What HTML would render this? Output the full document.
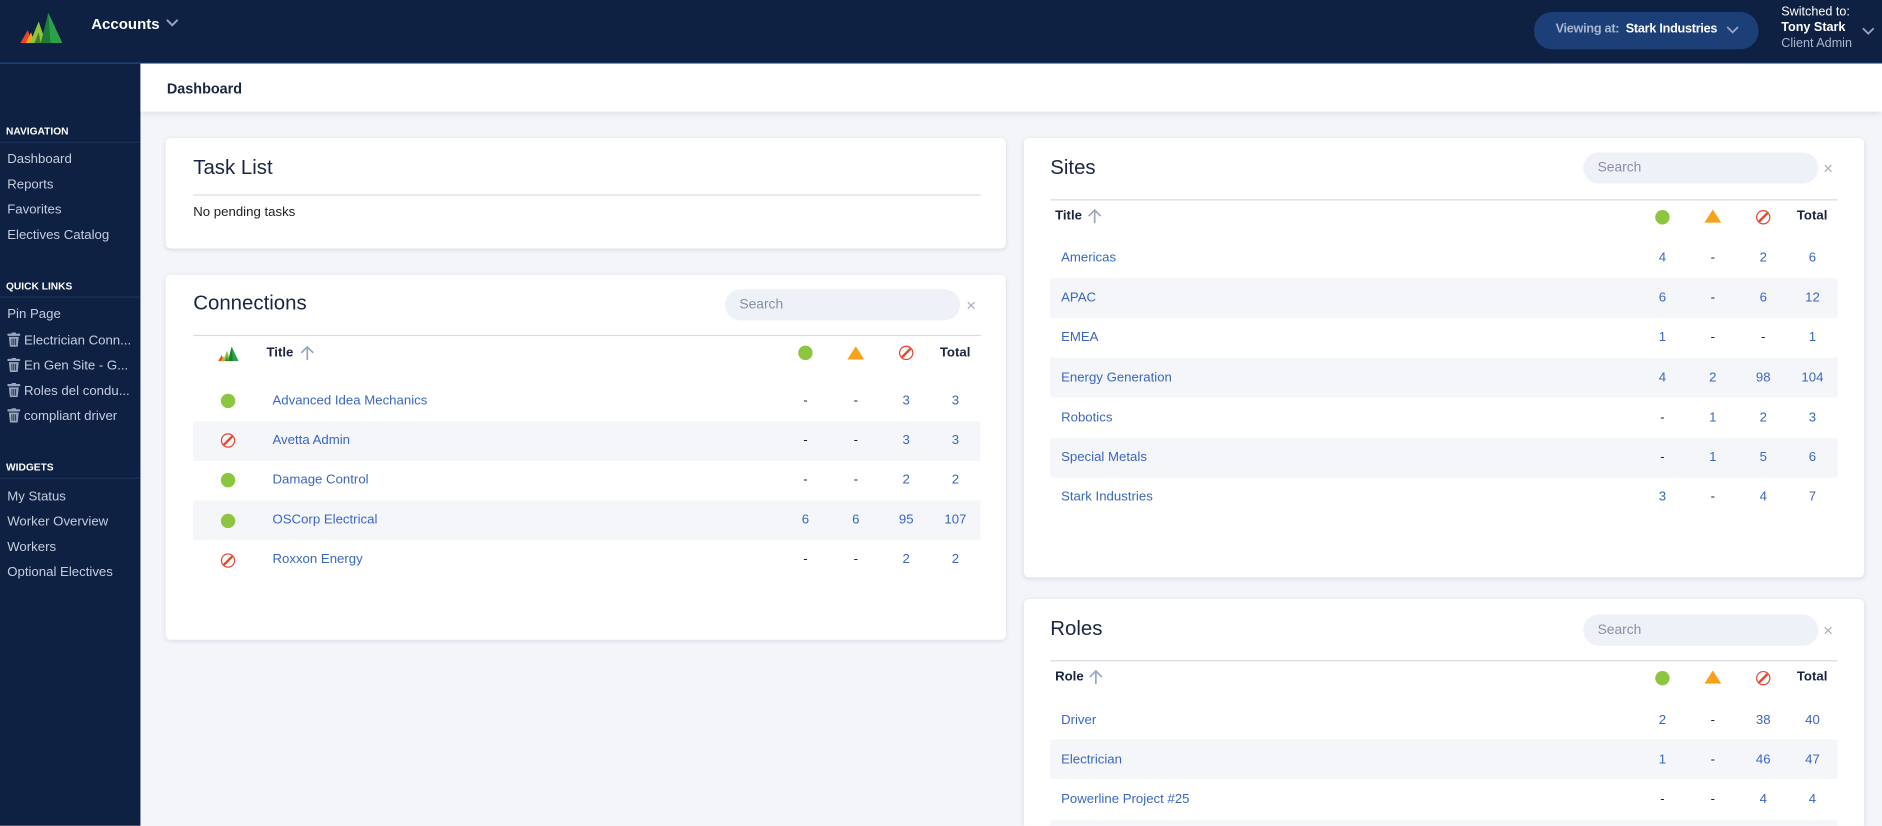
<!DOCTYPE html>
<html><head><meta charset="utf-8"><style>
html,body{margin:0;padding:0;width:1882px;height:825px;overflow:hidden;background:#f3f5f9;}
#w{position:absolute;left:0;top:0;width:1568px;height:688px;transform:scale(1.2003);transform-origin:0 0;font-family:"Liberation Sans",Arial,sans-serif;overflow:hidden;}
.abs{position:absolute;}
.top{left:0;top:0;width:1568px;height:53px;background:#0e2143;border-bottom:1px solid #1d3f72;box-sizing:border-box;}
.side{left:0;top:53px;width:117px;height:640px;background:#0e2143;}
.sh{position:absolute;left:5px;font-size:8.5px;font-weight:bold;color:#fff;}
.sl{position:absolute;left:0;width:117px;height:1px;background:#1c3258;}
.si{position:absolute;left:6px;font-size:11px;color:#c5cee0;white-space:nowrap;}
.si svg{vertical-align:-2px;margin-right:3px;}
.card{position:absolute;background:#fff;border-radius:4px;box-shadow:0 1px 4px rgba(20,40,80,.12);}
.ct{position:absolute;font-size:17px;color:#1a2540;}
.hl{position:absolute;height:1px;background:#d8dbe3;}
.srch{position:absolute;width:196px;height:26px;border-radius:13px;background:#eef1f8;font-size:11.5px;color:#8690a5;line-height:26px;box-sizing:border-box;padding-left:12px;}
.x{position:absolute;font-size:14px;color:#a7aec0;}
.row{position:absolute;height:33px;}
.st{background:#f4f6fa;}
.t{position:absolute;font-size:11px;white-space:nowrap;transform:translate(-50%,-50%);}
.l{position:absolute;font-size:11px;color:#3b66c0;white-space:nowrap;transform:translateY(-50%);}
.b{color:#3b66c0;} .d{color:#222;}
.hd{position:absolute;font-size:11px;font-weight:bold;color:#1a2540;transform:translateY(-50%);}
.gc{position:absolute;width:12px;height:12px;border-radius:50%;background:#8cc63f;transform:translate(-50%,-50%);}
.tri{position:absolute;width:0;height:0;border-left:7px solid transparent;border-right:7px solid transparent;border-bottom:11px solid #f7a21b;transform:translate(-50%,-50%);}
.ban{position:absolute;width:10px;height:10px;border:1.6px solid #e8452f;border-radius:50%;transform:translate(-50%,-50%);overflow:hidden;}
.ban:after{content:"";position:absolute;left:4.2px;top:-2px;width:1.6px;height:14px;background:#e8452f;transform:rotate(45deg);}
.arr{position:absolute;transform:translateY(-50%);}
</style></head><body><div id="w">
<svg width="0" height="0" style="position:absolute"><defs>
<symbol id="logo" viewBox="0 0 40 32">
<polygon points="1,32 8,20 12,32" fill="#e8452f"/>
<polygon points="6,32 11,22 14,32" fill="#f7a21b"/>
<polygon points="10,32 18,12 25,32" fill="#8cc63f"/>
<polygon points="14,32 18,22 20,32" fill="#4a7d2a"/>
<polygon points="20,32 27,4 40,32 31,32" fill="#2aa24a"/>
<polygon points="20,32 27,4 29,32" fill="#1e7a38"/>
</symbol>
<symbol id="trash" viewBox="0 0 12 13"><rect x="0" y="1" width="12" height="2" rx="1" fill="#9aa6bd"/><rect x="4" y="0" width="4" height="2" fill="#9aa6bd"/><path d="M1.5 4h9l-1 9h-7z" fill="#9aa6bd"/><path d="M4.3 5.5v6M6 5.5v6M7.7 5.5v6" stroke="#0e2143" stroke-width=".8"/></symbol>
</defs></svg>
<div class="abs top">
  <svg class="abs" style="left:16px;top:7px" width="36" height="29"><use href="#logo"/></svg>
  <div class="abs" style="left:76px;top:13px;font-size:12.5px;font-weight:bold;color:#fff">Accounts</div>
  <svg class="abs" style="left:138px;top:15px" width="11" height="8"><path d="M1 1.5 L5.5 6 L10 1.5" stroke="#9aa6bd" stroke-width="1.6" fill="none"/></svg>
  <div class="abs" style="left:1278px;top:10px;width:187px;height:31px;border-radius:15px;background:#1d3f78"></div>
  <div class="abs" style="left:1296px;top:18px;font-size:10.5px;color:#a9b6cf;font-weight:bold;white-space:nowrap;letter-spacing:-0.2px">Viewing at:&nbsp; <span style="color:#fff">Stark Industries</span></div>
  <svg class="abs" style="left:1438px;top:21px" width="11" height="8"><path d="M1 1.5 L5.5 6 L10 1.5" stroke="#9aa6bd" stroke-width="1.5" fill="none"/></svg>
  <div class="abs" style="left:1484px;top:4px;font-size:10.5px;color:#fff;line-height:13px">Switched to:<br><b>Tony Stark</b><br><span style="color:#a9b6cf">Client Admin</span></div>
  <svg class="abs" style="left:1551px;top:22px" width="11" height="8"><path d="M1 1.5 L5.5 6 L10 1.5" stroke="#9aa6bd" stroke-width="1.5" fill="none"/></svg>
</div>
<div class="abs side">
  <div class="sh" style="top:51px">NAVIGATION</div><div class="sl" style="top:65px"></div>
  <div class="si" style="top:74px">Dashboard</div>
  <div class="si" style="top:95px">Reports</div>
  <div class="si" style="top:116px">Favorites</div>
  <div class="si" style="top:137px">Electives Catalog</div>
  <div class="sh" style="top:180px">QUICK LINKS</div><div class="sl" style="top:194px"></div>
  <div class="si" style="top:203px">Pin Page</div>
  <div class="si" style="top:224px"><svg width="11" height="12"><use href="#trash"/></svg>Electrician Conn...</div>
  <div class="si" style="top:245px"><svg width="11" height="12"><use href="#trash"/></svg>En Gen Site - G...</div>
  <div class="si" style="top:266px"><svg width="11" height="12"><use href="#trash"/></svg>Roles del condu...</div>
  <div class="si" style="top:287px"><svg width="11" height="12"><use href="#trash"/></svg>compliant driver</div>
  <div class="sh" style="top:331px">WIDGETS</div><div class="sl" style="top:345px"></div>
  <div class="si" style="top:355px">My Status</div>
  <div class="si" style="top:376px">Worker Overview</div>
  <div class="si" style="top:397px">Workers</div>
  <div class="si" style="top:418px">Optional Electives</div>
</div>
<div class="abs" style="left:117px;top:53px;width:1451px;height:40px;background:#fff;box-shadow:0 2px 5px rgba(20,40,80,.1)"></div>
<div class="abs" style="left:139px;top:67px;font-size:12px;font-weight:bold;color:#1a2540">Dashboard</div>

<div class="card" style="left:138px;top:115px;width:700px;height:92px"></div>
<div class="ct" style="left:161px;top:130px">Task List</div>
<div class="hl" style="left:161px;top:162px;width:656px"></div>
<div class="abs" style="left:161px;top:171px;font-size:11px;color:#222">No pending tasks</div>

<div class="card" style="left:138px;top:229px;width:700px;height:304px"></div>
<div class="ct" style="left:161px;top:243px">Connections</div>
<div class="srch" style="left:604px;top:241px">Search</div><div class="x" style="left:805px;top:246px">×</div>
<div class="hl" style="left:161px;top:279px;width:656px"></div>
<svg class="abs" style="left:181px;top:287px" width="18" height="14"><use href="#logo"/></svg>
<div class="hd" style="left:222px;top:294px">Title</div>
<svg class="arr" style="left:249px;top:294px" width="14" height="14"><path d="M7 13V2M2 7l5-5 5 5" stroke="#9aa6bd" stroke-width="1.4" fill="none"/></svg>
<div class="gc" style="left:671px;top:294px"></div><div class="tri" style="left:713px;top:294px"></div><div class="ban" style="left:755px;top:294px"></div>
<div class="hd" style="left:783px;top:294px">Total</div>
<div class="row st" style="left:161px;top:351px;width:656px"></div>
<div class="row st" style="left:161px;top:417px;width:656px"></div>
<div class="gc" style="left:190px;top:334px"></div><div class="l" style="left:227px;top:334px">Advanced Idea Mechanics</div>
<div class="t d" style="left:671px;top:334px">-</div><div class="t d" style="left:713px;top:334px">-</div><div class="t b" style="left:755px;top:334px">3</div><div class="t b" style="left:796px;top:334px">3</div>
<div class="ban" style="left:190px;top:367px"></div><div class="l" style="left:227px;top:367px">Avetta Admin</div>
<div class="t d" style="left:671px;top:367px">-</div><div class="t d" style="left:713px;top:367px">-</div><div class="t b" style="left:755px;top:367px">3</div><div class="t b" style="left:796px;top:367px">3</div>
<div class="gc" style="left:190px;top:400px"></div><div class="l" style="left:227px;top:400px">Damage Control</div>
<div class="t d" style="left:671px;top:400px">-</div><div class="t d" style="left:713px;top:400px">-</div><div class="t b" style="left:755px;top:400px">2</div><div class="t b" style="left:796px;top:400px">2</div>
<div class="gc" style="left:190px;top:434px"></div><div class="l" style="left:227px;top:433px">OSCorp Electrical</div>
<div class="t b" style="left:671px;top:433px">6</div><div class="t b" style="left:713px;top:433px">6</div><div class="t b" style="left:755px;top:433px">95</div><div class="t b" style="left:796px;top:433px">107</div>
<div class="ban" style="left:190px;top:467px"></div><div class="l" style="left:227px;top:466px">Roxxon Energy</div>
<div class="t d" style="left:671px;top:466px">-</div><div class="t d" style="left:713px;top:466px">-</div><div class="t b" style="left:755px;top:466px">2</div><div class="t b" style="left:796px;top:466px">2</div>

<div class="card" style="left:853px;top:115px;width:700px;height:366px"></div>
<div class="ct" style="left:875px;top:130px">Sites</div>
<div class="srch" style="left:1319px;top:127px">Search</div><div class="x" style="left:1519px;top:132px">×</div>
<div class="hl" style="left:875px;top:166px;width:656px"></div>
<div class="hd" style="left:879px;top:180px">Title</div>
<svg class="arr" style="left:905px;top:180px" width="14" height="14"><path d="M7 13V2M2 7l5-5 5 5" stroke="#9aa6bd" stroke-width="1.4" fill="none"/></svg>
<div class="gc" style="left:1385px;top:181px"></div><div class="tri" style="left:1427px;top:180px"></div><div class="ban" style="left:1469px;top:181px"></div>
<div class="hd" style="left:1497px;top:180px">Total</div>
<div class="row st" style="left:875px;top:232px;width:656px"></div>
<div class="row st" style="left:875px;top:298px;width:656px"></div>
<div class="row st" style="left:875px;top:365px;width:656px"></div>
<div class="l" style="left:884px;top:215px">Americas</div><div class="t b" style="left:1385px;top:215px">4</div><div class="t d" style="left:1427px;top:215px">-</div><div class="t b" style="left:1469px;top:215px">2</div><div class="t b" style="left:1510px;top:215px">6</div>
<div class="l" style="left:884px;top:248px">APAC</div><div class="t b" style="left:1385px;top:248px">6</div><div class="t d" style="left:1427px;top:248px">-</div><div class="t b" style="left:1469px;top:248px">6</div><div class="t b" style="left:1510px;top:248px">12</div>
<div class="l" style="left:884px;top:281px">EMEA</div><div class="t b" style="left:1385px;top:281px">1</div><div class="t d" style="left:1427px;top:281px">-</div><div class="t d" style="left:1469px;top:281px">-</div><div class="t b" style="left:1510px;top:281px">1</div>
<div class="l" style="left:884px;top:315px">Energy Generation</div><div class="t b" style="left:1385px;top:315px">4</div><div class="t b" style="left:1427px;top:315px">2</div><div class="t b" style="left:1469px;top:315px">98</div><div class="t b" style="left:1510px;top:315px">104</div>
<div class="l" style="left:884px;top:348px">Robotics</div><div class="t d" style="left:1385px;top:348px">-</div><div class="t b" style="left:1427px;top:348px">1</div><div class="t b" style="left:1469px;top:348px">2</div><div class="t b" style="left:1510px;top:348px">3</div>
<div class="l" style="left:884px;top:381px">Special Metals</div><div class="t d" style="left:1385px;top:381px">-</div><div class="t b" style="left:1427px;top:381px">1</div><div class="t b" style="left:1469px;top:381px">5</div><div class="t b" style="left:1510px;top:381px">6</div>
<div class="l" style="left:884px;top:414px">Stark Industries</div><div class="t b" style="left:1385px;top:414px">3</div><div class="t d" style="left:1427px;top:414px">-</div><div class="t b" style="left:1469px;top:414px">4</div><div class="t b" style="left:1510px;top:414px">7</div>

<div class="card" style="left:853px;top:499px;width:700px;height:200px"></div>
<div class="ct" style="left:875px;top:514px">Roles</div>
<div class="srch" style="left:1319px;top:512px">Search</div><div class="x" style="left:1519px;top:517px">×</div>
<div class="hl" style="left:875px;top:550px;width:656px"></div>
<div class="hd" style="left:879px;top:564px">Role</div>
<svg class="arr" style="left:906px;top:564px" width="14" height="14"><path d="M7 13V2M2 7l5-5 5 5" stroke="#9aa6bd" stroke-width="1.4" fill="none"/></svg>
<div class="gc" style="left:1385px;top:565px"></div><div class="tri" style="left:1427px;top:564px"></div><div class="ban" style="left:1469px;top:565px"></div>
<div class="hd" style="left:1497px;top:564px">Total</div>
<div class="row st" style="left:875px;top:616px;width:656px"></div>
<div class="row st" style="left:875px;top:683px;width:656px"></div>
<div class="l" style="left:884px;top:600px">Driver</div><div class="t b" style="left:1385px;top:600px">2</div><div class="t d" style="left:1427px;top:600px">-</div><div class="t b" style="left:1469px;top:600px">38</div><div class="t b" style="left:1510px;top:600px">40</div>
<div class="l" style="left:884px;top:633px">Electrician</div><div class="t b" style="left:1385px;top:633px">1</div><div class="t d" style="left:1427px;top:633px">-</div><div class="t b" style="left:1469px;top:633px">46</div><div class="t b" style="left:1510px;top:633px">47</div>
<div class="l" style="left:884px;top:666px">Powerline Project #25</div><div class="t d" style="left:1385px;top:666px">-</div><div class="t d" style="left:1427px;top:666px">-</div><div class="t b" style="left:1469px;top:666px">4</div><div class="t b" style="left:1510px;top:666px">4</div>
</div></body></html>
